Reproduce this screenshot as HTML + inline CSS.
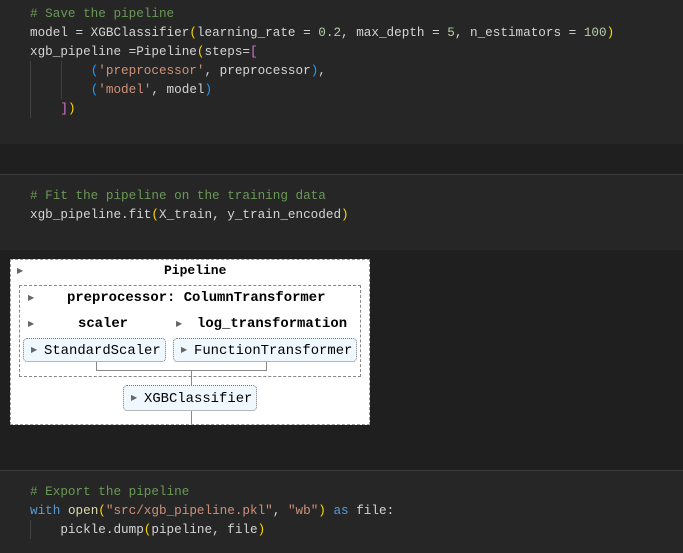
<!DOCTYPE html>
<html><head><style>
body{margin:0;width:683px;height:552px;background:#1f1f1f;overflow:hidden;position:relative;font-family:"Liberation Mono",monospace}
.cell{position:absolute;left:0;width:683px;background:#262626;border-top:1px solid #3b3b3b}
.code{position:absolute;left:30px;font-size:12.65px;line-height:19px;color:#d4d4d4;white-space:pre}
.c{color:#6a9955}.s{color:#ce9178}.n{color:#b5cea8}.y{color:#ffd700}.p{color:#da70d6}.b{color:#179fff}.k{color:#569cd6}.f{color:#dcdcaa}.v{color:#9cdcfe}
.guide{position:absolute;width:1px;background:#404040}
.w{position:absolute;left:10px;top:259px;width:358px;height:164px;background:#fff;border:1px dashed #999;color:#000;font-size:13.9px}
.t{position:absolute;white-space:pre}
.tri{position:absolute;font-size:8px;color:#666}
.box{position:absolute;background:#f0f8ff;border:1px dotted #777;border-radius:4px;height:24px;line-height:24px;box-sizing:border-box}
.ln{position:absolute;background:#888}
</style></head><body>
<div class="cell" style="top:-1px;height:144px"></div>
<div class="code" style="top:4px"><span class="c"># Save the pipeline</span>
model = XGBClassifier<span class="y">(</span>learning_rate = <span class="n">0.2</span>, max_depth = <span class="n">5</span>, n_estimators = <span class="n">100</span><span class="y">)</span>
xgb_pipeline =Pipeline<span class="y">(</span>steps=<span class="p">[</span>
        <span class="b">(</span><span class="s">'preprocessor'</span>, preprocessor<span class="b">)</span>,
        <span class="b">(</span><span class="s">'model'</span>, model<span class="b">)</span>
    <span class="p">]</span><span class="y">)</span></div>
<div class="guide" style="left:30px;top:61px;height:57px"></div>
<div class="guide" style="left:61px;top:61px;height:38px"></div>
<div class="cell" style="top:174px;height:75px"></div>
<div class="code" style="top:186px"><span class="c"># Fit the pipeline on the training data</span>
xgb_pipeline.fit<span class="y">(</span>X_train, y_train_encoded<span class="y">)</span></div>
<div class="w">
<span class="tri" style="left:6px;top:6px">▶</span>
<div class="t" style="left:153px;top:3px;font-weight:bold;font-size:13px">Pipeline</div>
<div style="position:absolute;left:8px;top:25px;width:340px;height:90px;border:1px dashed #888"></div>
<span class="tri" style="left:17px;top:33px">▶</span>
<div class="t" style="left:56px;top:30px;font-weight:bold">preprocessor: ColumnTransformer</div>
<span class="tri" style="left:17px;top:59px">▶</span>
<div class="t" style="left:67px;top:56px;font-weight:bold">scaler</div>
<span class="tri" style="left:165px;top:59px">▶</span>
<div class="t" style="left:186px;top:56px;font-weight:bold">log_transformation</div>
<div class="ln" style="left:85px;top:102px;width:1px;height:9px"></div>
<div class="ln" style="left:255px;top:102px;width:1px;height:9px"></div>
<div class="ln" style="left:85px;top:110px;width:171px;height:1px"></div>
<div class="ln" style="left:180px;top:110px;width:1px;height:15px"></div>
<div class="ln" style="left:180px;top:150px;width:1px;height:14px"></div>
<div class="box" style="left:12px;top:78px;width:143px"><span class="tri" style="left:7px;top:0">▶</span><span class="t" style="left:20px">StandardScaler</span></div>
<div class="box" style="left:162px;top:78px;width:184px"><span class="tri" style="left:7px;top:0">▶</span><span class="t" style="left:20px">FunctionTransformer</span></div>
<div class="box" style="left:112px;top:125px;width:134px;height:26px;line-height:26px"><span class="tri" style="left:7px;top:0">▶</span><span class="t" style="left:20px">XGBClassifier</span></div>
</div>
<div class="cell" style="top:470px;height:82px"></div>
<div class="code" style="top:482px"><span class="c"># Export the pipeline</span>
<span class="k">with</span> <span class="f">open</span><span class="y">(</span><span class="s">"src/xgb_pipeline.pkl"</span>, <span class="s">"wb"</span><span class="y">)</span> <span class="k">as</span> file:
    pickle.dump<span class="y">(</span>pipeline, file<span class="y">)</span></div>
<div class="guide" style="left:30px;top:520px;height:19px"></div>
</body></html>
